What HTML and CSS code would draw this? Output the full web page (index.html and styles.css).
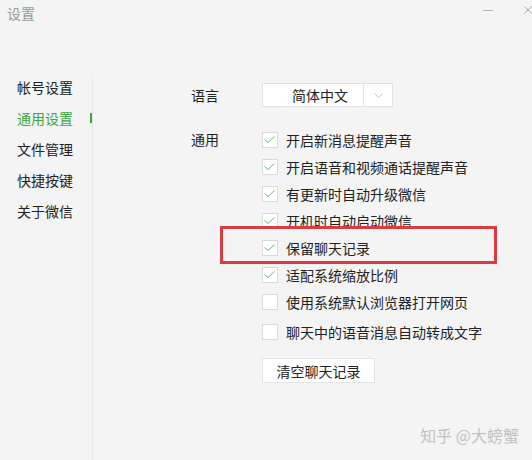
FILE: index.html
```html
<!DOCTYPE html>
<html lang="zh-CN">
<head>
    <meta charset="UTF-8">
    <meta name="viewport" content="width=device-width, initial-scale=1.0">
    <title>设置</title>
    <link rel="stylesheet" href="styles.css">
</head>
<body>
    <div class="titlebar">
        <span class="title">设置</span>
        <div class="win-controls">
            <span class="win-min"></span>
            <svg class="win-close" width="8" height="8" viewBox="0 0 8 8">
                <path d="M0.5 0.5 L7.5 7.5 M7.5 0.5 L0.5 7.5" stroke="#a8a8a8" stroke-width="1" fill="none"/>
            </svg>
        </div>
    </div>

    <div class="layout">
        <ul class="nav">
            <li class="nav-item">帐号设置</li>
            <li class="nav-item active">通用设置</li>
            <li class="nav-item">文件管理</li>
            <li class="nav-item">快捷按键</li>
            <li class="nav-item">关于微信</li>
        </ul>

        <div class="content">
            <div class="setting-row lang-row">
                <div class="setting-label">语言</div>
                <div class="select">
                    <span class="select-value">简体中文</span>
                    <span class="select-arrow">
                        <svg width="9" height="5" viewBox="0 0 9 5">
                            <path d="M0.5 0.5 L4.5 4.5 L8.5 0.5" stroke="#c6c6c6" stroke-width="1" fill="none"/>
                        </svg>
                    </span>
                </div>
            </div>

            <div class="setting-row general-row">
                <div class="setting-label">通用</div>
                <div class="options">
                    <label class="option">
                        <span class="checkbox checked"><svg width="16" height="16" viewBox="0 0 16 16"><path d="M2.5 7.5 L6 10.5 L12.5 4.5" stroke="#6cbb6c" stroke-width="1" fill="none"/></svg></span>
                        开启新消息提醒声音
                    </label>
                    <label class="option">
                        <span class="checkbox checked"><svg width="16" height="16" viewBox="0 0 16 16"><path d="M2.5 7.5 L6 10.5 L12.5 4.5" stroke="#6cbb6c" stroke-width="1" fill="none"/></svg></span>
                        开启语音和视频通话提醒声音
                    </label>
                    <label class="option">
                        <span class="checkbox checked"><svg width="16" height="16" viewBox="0 0 16 16"><path d="M2.5 7.5 L6 10.5 L12.5 4.5" stroke="#6cbb6c" stroke-width="1" fill="none"/></svg></span>
                        有更新时自动升级微信
                    </label>
                    <label class="option">
                        <span class="checkbox checked"><svg width="16" height="16" viewBox="0 0 16 16"><path d="M2.5 7.5 L6 10.5 L12.5 4.5" stroke="#6cbb6c" stroke-width="1" fill="none"/></svg></span>
                        开机时自动启动微信
                    </label>
                    <label class="option marked">
                        <span class="checkbox checked"><svg width="16" height="16" viewBox="0 0 16 16"><path d="M2.5 7.5 L6 10.5 L12.5 4.5" stroke="#6cbb6c" stroke-width="1" fill="none"/></svg></span>
                        保留聊天记录
                    </label>
                    <label class="option">
                        <span class="checkbox checked"><svg width="16" height="16" viewBox="0 0 16 16"><path d="M2.5 7.5 L6 10.5 L12.5 4.5" stroke="#6cbb6c" stroke-width="1" fill="none"/></svg></span>
                        适配系统缩放比例
                    </label>
                    <label class="option">
                        <span class="checkbox"></span>
                        使用系统默认浏览器打开网页
                    </label>
                    <label class="option last">
                        <span class="checkbox"></span>
                        聊天中的语音消息自动转成文字
                    </label>

                    <button class="clear-btn">清空聊天记录</button>
                </div>
            </div>
        </div>
    </div>

    <div class="watermark">知乎 @大螃蟹</div>
</body>
</html>
```

FILE: styles.css
```css
body {
    margin: 0;
    width: 532px;
    height: 460px;
    overflow: hidden;
    position: relative;
    background-color: #f4f4f4;
    font-family: "Noto Sans CJK SC", "Noto Sans", sans-serif;
    font-size: 14px;
    color: #222;
}

.titlebar {
    height: 28px;
    display: flex;
    justify-content: space-between;
    align-items: flex-start;
    padding-left: 7px;
}

.title {
    margin-top: 5px;
    line-height: 16px;
    color: #9a9a9a;
}

.win-controls {
    display: flex;
    align-items: flex-start;
    gap: 31px;
    padding-top: 6px;
}

.win-min {
    width: 10px;
    height: 1px;
    margin-top: 4px;
    background-color: #b0b0b0;
}

.layout {
    display: flex;
}

.nav {
    list-style: none;
    margin: 0;
    padding: 43px 0 0 0;
    width: 92px;
}

.nav-item {
    height: 31px;
    padding-left: 17px;
    display: flex;
    align-items: center;
    justify-content: space-between;
}

.nav-item.active {
    color: #3aa93a;
}

.nav-item.active::after {
    content: "";
    width: 2px;
    height: 10px;
    background-color: #3aa93a;
}

.content {
    flex: 1;
    margin-top: 50px;
    height: 382px;
    border-left: 1px solid #e6e6e6;
    padding: 5px 0 0 98px;
}

.setting-row {
    display: flex;
}

.setting-label {
    width: 71px;
}

.lang-row {
    align-items: center;
}

.select {
    display: flex;
    width: 131px;
    height: 24px;
    box-sizing: border-box;
    border: 1px solid #e2e2e2;
    background-color: #fff;
}

.select-value {
    flex: 1;
    padding-left: 29px;
    line-height: 22px;
}

.select-arrow {
    width: 28px;
    border-left: 1px solid #e6e6e6;
    display: flex;
    align-items: center;
    justify-content: center;
}

.general-row {
    margin-top: 19px;
}

.general-row .setting-label {
    line-height: 27px;
}

.options {
    display: flex;
    flex-direction: column;
    align-items: flex-start;
}

.option {
    height: 27px;
    display: flex;
    align-items: center;
    gap: 8px;
    position: relative;
}

.option.last {
    margin-top: 3px;
}

.checkbox {
    width: 16px;
    height: 16px;
    box-sizing: border-box;
    border: 1px solid #dadada;
    background-color: #fff;
    display: flex;
}

.checkbox svg {
    margin: -1px;
}

/* red annotation frame round the chat history option */
.option.marked::after {
    content: "";
    position: absolute;
    left: -42px;
    top: -8px;
    width: 277px;
    height: 38px;
    box-sizing: border-box;
    border: 3px solid #dc3b41;
}

.clear-btn {
    margin-top: 13px;
    width: 113px;
    height: 25px;
    padding: 0;
    border: 1px solid #e4e4e4;
    background-color: #fff;
    font-family: inherit;
    font-size: 14px;
    color: #222;
}

.watermark {
    position: absolute;
    right: 13px;
    bottom: 13px;
    font-size: 16px;
    color: #c2c2c2;
}
```
